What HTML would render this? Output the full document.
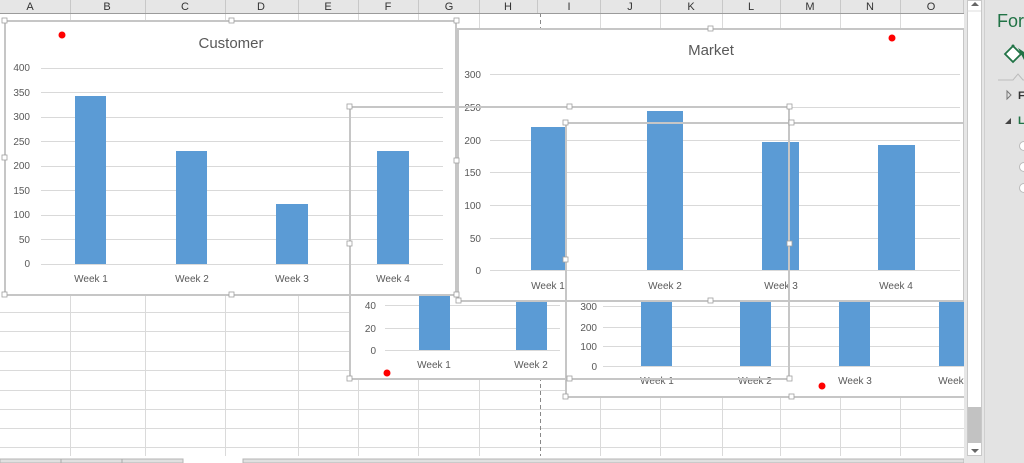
<!DOCTYPE html>
<html><head><meta charset="utf-8"><style>
html,body{margin:0;padding:0;width:1024px;height:463px;overflow:hidden;background:#fff;}
svg{display:block;font-family:"Liberation Sans",sans-serif;}
.ax{font-size:10px;fill:#595959;text-anchor:end;}
.wk{font-size:10px;fill:#595959;text-anchor:middle;}
.gl{stroke:#d9d9d9;stroke-width:1;}
.bar{fill:#5b9bd5;}
.fr{fill:none;stroke:#c6c6c6;stroke-width:2;}
.h{fill:#fff;stroke:#a0a0a0;stroke-width:0.8;}
.col{font-size:11px;fill:#333;text-anchor:middle;}
</style></head><body>
<svg width="1024" height="463" viewBox="0 0 1024 463">
<!-- grid -->
<rect x="0" y="0" width="964" height="463" fill="#fff"/>
<g stroke="#dadada" stroke-width="1">
<line x1="70.5" y1="13" x2="70.5" y2="456"/><line x1="145.5" y1="13" x2="145.5" y2="456"/><line x1="225.5" y1="13" x2="225.5" y2="456"/><line x1="298.5" y1="13" x2="298.5" y2="456"/><line x1="358.5" y1="13" x2="358.5" y2="456"/><line x1="418.5" y1="13" x2="418.5" y2="456"/><line x1="479.5" y1="13" x2="479.5" y2="456"/><line x1="600.5" y1="13" x2="600.5" y2="456"/><line x1="660.5" y1="13" x2="660.5" y2="456"/><line x1="722.5" y1="13" x2="722.5" y2="456"/><line x1="780.5" y1="13" x2="780.5" y2="456"/><line x1="840.5" y1="13" x2="840.5" y2="456"/><line x1="900.5" y1="13" x2="900.5" y2="456"/>
<line x1="0" y1="390.5" x2="964" y2="390.5"/><line x1="0" y1="409.5" x2="964" y2="409.5"/><line x1="0" y1="428.5" x2="964" y2="428.5"/><line x1="0" y1="447.5" x2="964" y2="447.5"/>
<line x1="0" y1="312.5" x2="350" y2="312.5"/><line x1="0" y1="331.5" x2="350" y2="331.5"/><line x1="0" y1="351.5" x2="350" y2="351.5"/><line x1="0" y1="370.5" x2="350" y2="370.5"/>
</g>
<line x1="540.5" y1="13" x2="540.5" y2="456" stroke="#888" stroke-dasharray="4,3"/>
<!-- headers -->
<rect x="0" y="0" width="964" height="13" fill="#e6e6e6"/>
<line x1="0" y1="13.5" x2="964" y2="13.5" stroke="#9b9b9b"/>
<g stroke="#c8c8c8"><line x1="70.5" y1="0" x2="70.5" y2="13"/><line x1="145.5" y1="0" x2="145.5" y2="13"/><line x1="225.5" y1="0" x2="225.5" y2="13"/><line x1="298.5" y1="0" x2="298.5" y2="13"/><line x1="358.5" y1="0" x2="358.5" y2="13"/><line x1="418.5" y1="0" x2="418.5" y2="13"/><line x1="479.5" y1="0" x2="479.5" y2="13"/><line x1="537.5" y1="0" x2="537.5" y2="13"/><line x1="600.5" y1="0" x2="600.5" y2="13"/><line x1="660.5" y1="0" x2="660.5" y2="13"/><line x1="722.5" y1="0" x2="722.5" y2="13"/><line x1="780.5" y1="0" x2="780.5" y2="13"/><line x1="840.5" y1="0" x2="840.5" y2="13"/><line x1="900.5" y1="0" x2="900.5" y2="13"/><line x1="963.5" y1="0" x2="963.5" y2="13"/></g>
<g class="col"><text x="30" y="10">A</text><text x="107" y="10">B</text><text x="185" y="10">C</text><text x="261" y="10">D</text><text x="328" y="10">E</text><text x="388" y="10">F</text><text x="449" y="10">G</text><text x="508" y="10">H</text><text x="569" y="10">I</text><text x="630" y="10">J</text><text x="691" y="10">K</text><text x="751" y="10">L</text><text x="810" y="10">M</text><text x="870" y="10">N</text><text x="931" y="10">O</text></g>

<!-- chart3 (lower-left) -->
<rect x="350" y="107" width="439" height="272" fill="#fff"/>
<line class="gl" x1="385" y1="305.5" x2="560" y2="305.5"/><line class="gl" x1="385" y1="328.5" x2="560" y2="328.5"/><line class="gl" x1="385" y1="350.5" x2="560" y2="350.5"/>
<text class="ax" x="376" y="309">40</text><text class="ax" x="376" y="332">20</text><text class="ax" x="376" y="354">0</text>
<rect class="bar" x="419" y="290" width="31" height="60"/><rect class="bar" x="516" y="290" width="31" height="60"/>
<text class="wk" x="434" y="368">Week 1</text><text class="wk" x="531" y="368">Week 2</text>
<circle cx="387" cy="373" r="3.5" fill="#f00"/>

<!-- chart4 (lower-right) -->
<rect x="566" y="123" width="398" height="274" fill="#fff"/>
<line class="gl" x1="603" y1="306.5" x2="964" y2="306.5"/><line class="gl" x1="603" y1="327.5" x2="964" y2="327.5"/><line class="gl" x1="603" y1="346.5" x2="964" y2="346.5"/><line class="gl" x1="603" y1="366.5" x2="964" y2="366.5"/>
<text class="ax" x="597" y="310">300</text><text class="ax" x="597" y="331">200</text><text class="ax" x="597" y="350">100</text><text class="ax" x="597" y="370">0</text>
<rect class="bar" x="641" y="295" width="31" height="71"/><rect class="bar" x="740" y="295" width="31" height="71"/><rect class="bar" x="839" y="295" width="31" height="71"/><rect class="bar" x="939" y="295" width="25" height="71"/>
<text class="wk" x="657" y="384">Week 1</text><text class="wk" x="755" y="384">Week 2</text><text class="wk" x="855" y="384">Week 3</text><text class="wk" x="951" y="384">Week</text>
<circle cx="822" cy="386" r="3.5" fill="#f00"/>

<!-- Customer -->
<rect x="5" y="21" width="451" height="274" fill="#fff"/>
<text x="231" y="48" font-size="15" fill="#595959" text-anchor="middle">Customer</text>
<g class="gl"><line x1="41" y1="68.5" x2="443" y2="68.5"/><line x1="41" y1="92.5" x2="443" y2="92.5"/><line x1="41" y1="117.5" x2="443" y2="117.5"/><line x1="41" y1="141.5" x2="443" y2="141.5"/><line x1="41" y1="166.5" x2="443" y2="166.5"/><line x1="41" y1="190.5" x2="443" y2="190.5"/><line x1="41" y1="215.5" x2="443" y2="215.5"/><line x1="41" y1="239.5" x2="443" y2="239.5"/><line x1="41" y1="264.5" x2="443" y2="264.5"/></g>
<g class="ax"><text x="30" y="71">400</text><text x="30" y="96">350</text><text x="30" y="120">300</text><text x="30" y="145">250</text><text x="30" y="169">200</text><text x="30" y="194">150</text><text x="30" y="218">100</text><text x="30" y="243">50</text><text x="30" y="267">0</text></g>
<rect class="bar" x="75" y="96" width="31" height="168"/><rect class="bar" x="176" y="151" width="31" height="113"/><rect class="bar" x="276" y="204" width="32" height="60"/><rect class="bar" x="377" y="151" width="32" height="113"/>
<text class="wk" x="91" y="282">Week 1</text><text class="wk" x="192" y="282">Week 2</text><text class="wk" x="292" y="282">Week 3</text><text class="wk" x="393" y="282">Week 4</text>
<circle cx="62" cy="35" r="3.5" fill="#f00"/>

<!-- Market -->
<rect x="458" y="29" width="506" height="272" fill="#fff"/>
<text x="711" y="55" font-size="15" fill="#595959" text-anchor="middle">Market</text>
<g class="gl"><line x1="490" y1="74.5" x2="960" y2="74.5"/><line x1="490" y1="107.5" x2="960" y2="107.5"/><line x1="490" y1="140.5" x2="960" y2="140.5"/><line x1="490" y1="172.5" x2="960" y2="172.5"/><line x1="490" y1="205.5" x2="960" y2="205.5"/><line x1="490" y1="238.5" x2="960" y2="238.5"/><line x1="490" y1="270.5" x2="960" y2="270.5"/></g>
<g class="ax"><text x="481" y="78">300</text><text x="481" y="111">250</text><text x="481" y="144">200</text><text x="481" y="176">150</text><text x="481" y="209">100</text><text x="481" y="242">50</text><text x="481" y="274">0</text></g>
<rect class="bar" x="531" y="127" width="34" height="143"/><rect class="bar" x="647" y="111" width="36" height="159"/><rect class="bar" x="762" y="142" width="37" height="128"/><rect class="bar" x="878" y="145" width="37" height="125"/>
<text class="wk" x="548" y="289">Week 1</text><text class="wk" x="665" y="289">Week 2</text><text class="wk" x="781" y="289">Week 3</text><text class="wk" x="896" y="289">Week 4</text>
<circle cx="892" cy="38" r="3.5" fill="#f00"/>

<!-- frames -->
<rect class="fr" x="5" y="21" width="451" height="274"/>
<rect class="fr" x="458" y="29" width="506" height="272"/>
<rect class="fr" x="350" y="107" width="439" height="272"/>
<rect class="fr" x="566" y="123" width="410" height="274"/>
<g>
<rect class="h" x="2" y="18" width="5" height="5"/><rect class="h" x="229" y="18" width="5" height="5"/><rect class="h" x="454" y="18" width="5" height="5"/><rect class="h" x="2" y="155" width="5" height="5"/><rect class="h" x="2" y="292" width="5" height="5"/><rect class="h" x="229" y="292" width="5" height="5"/><rect class="h" x="454" y="158" width="5" height="5"/><rect class="h" x="454" y="292" width="5" height="5"/>
<rect class="h" x="708" y="26" width="5" height="5"/><rect class="h" x="708" y="298" width="5" height="5"/><rect class="h" x="456" y="298" width="5" height="5"/>
<rect class="h" x="347" y="104" width="5" height="5"/><rect class="h" x="567" y="104" width="5" height="5"/><rect class="h" x="787" y="104" width="5" height="5"/><rect class="h" x="347" y="241" width="5" height="5"/><rect class="h" x="787" y="241" width="5" height="5"/><rect class="h" x="347" y="376" width="5" height="5"/><rect class="h" x="567" y="376" width="5" height="5"/><rect class="h" x="787" y="376" width="5" height="5"/>
<rect class="h" x="563" y="120" width="5" height="5"/><rect class="h" x="789" y="120" width="5" height="5"/><rect class="h" x="563" y="257" width="5" height="5"/><rect class="h" x="563" y="394" width="5" height="5"/><rect class="h" x="789" y="394" width="5" height="5"/>
</g>

<!-- bottom tabs -->
<rect x="0" y="456" width="964" height="7" fill="#fff"/>
<rect x="0" y="459" width="183" height="4" fill="#e0e0e0" stroke="#b5b5b5"/>
<line x1="61" y1="459" x2="61" y2="463" stroke="#aaa"/><line x1="122" y1="459" x2="122" y2="463" stroke="#aaa"/>
<rect x="243" y="459" width="721" height="4" fill="#e0e0e0" stroke="#b5b5b5"/>

<!-- scrollbar -->
<rect x="964" y="0" width="20" height="463" fill="#e6e6e6"/>
<rect x="967.5" y="0.5" width="14" height="455" fill="#fff" stroke="#c8c8c8"/>
<rect x="968" y="407" width="13" height="36" fill="#c2c2c2"/>
<path d="M971 6 L975 2 L979 6 Z" fill="#666"/><path d="M971 449 L975 453 L979 449 Z" fill="#666"/>
<line x1="967.5" y1="11" x2="981" y2="11" stroke="#ddd"/>

<!-- right panel -->
<rect x="984" y="0" width="40" height="463" fill="#e3e3e3"/>
<line x1="984.5" y1="0" x2="984.5" y2="463" stroke="#cfcfcf"/>
<text x="997" y="27" font-size="18" fill="#217346">For</text>
<path d="M1005 54 L1013 46 L1021 54 L1013 62 Z" fill="#fff" stroke="#217346" stroke-width="1.8"/>
<path d="M1018 48 L1024 52 L1024 60 Z" fill="#217346"/>
<circle cx="1013" cy="46" r="1.5" fill="#217346"/>
<path d="M998 80 L1013 80 L1018 74 L1023 80 L1024 80" fill="none" stroke="#bcbcbc"/>
<path d="M1007 91 L1011 95 L1007 99 Z" fill="none" stroke="#777"/>
<text x="1018" y="99" font-size="11" font-weight="bold" fill="#333">F</text>
<path d="M1011 118 L1011 124 L1005 124 Z" fill="#444"/>
<text x="1018" y="124" font-size="11" font-weight="bold" fill="#217346">L</text>
<circle cx="1024" cy="146" r="4.5" fill="#fff" stroke="#bbb"/>
<circle cx="1024" cy="167" r="4.5" fill="#fff" stroke="#bbb"/>
<circle cx="1024" cy="188" r="4.5" fill="#fff" stroke="#bbb"/>
</svg>
</body></html>
